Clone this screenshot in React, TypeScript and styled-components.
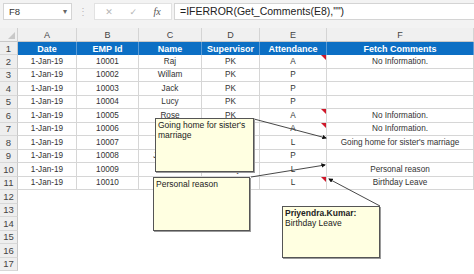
import styled, { createGlobalStyle } from "styled-components";

const GlobalStyle = createGlobalStyle`
    html, body {
        margin: 0;
        padding: 0;
        background: #ffffff;
    }
    body {
        font-family: "Liberation Sans", Arial, sans-serif;
    }
`;

type Row = {
    date: string;
    id: string;
    name: string;
    sup: string;
    att: string;
    comment: string;
    note?: "red" | "none";
};

const rows: Row[] = [
    { date: "1-Jan-19", id: "10001", name: "Raj", sup: "PK", att: "A", comment: "No Information.", note: "red" },
    { date: "1-Jan-19", id: "10002", name: "Willam", sup: "PK", att: "P", comment: "" },
    { date: "1-Jan-19", id: "10003", name: "Jack", sup: "PK", att: "P", comment: "" },
    { date: "1-Jan-19", id: "10004", name: "Lucy", sup: "PK", att: "P", comment: "" },
    { date: "1-Jan-19", id: "10005", name: "Rose", sup: "PK", att: "A", comment: "No Information.", note: "red" },
    { date: "1-Jan-19", id: "10006", name: "Mary", sup: "PK", att: "A", comment: "No Information.", note: "red" },
    { date: "1-Jan-19", id: "10007", name: "John", sup: "PK", att: "L", comment: "Going home for sister's marriage" },
    { date: "1-Jan-19", id: "10008", name: "Jonathan", sup: "Harry", att: "P", comment: "" },
    { date: "1-Jan-19", id: "10009", name: "Jacob", sup: "Harry", att: "L", comment: "Personal reason" },
    { date: "1-Jan-19", id: "10010", name: "Sam", sup: "Harry", att: "L", comment: "Birthday Leave", note: "red" },
];

const columns = ["A", "B", "C", "D", "E", "F"];
const headers = ["Date", "EMP Id", "Name", "Supervisor", "Attendance", "Fetch Comments"];
const emptyRows = [12, 13, 14, 15, 16, 17];

export default function App() {
    return (
        <Page>
            <GlobalStyle />
            <FormulaBar>
                <NameBox>
                    <span>F8</span>
                    <Caret>▾</Caret>
                </NameBox>
                <Grip>⋮</Grip>
                <FxButtons>
                    <FxGlyph>✕</FxGlyph>
                    <FxGlyph>✓</FxGlyph>
                    <FxLabel>fx</FxLabel>
                </FxButtons>
                <FormulaInput>=IFERROR(Get_Comments(E8),"")</FormulaInput>
            </FormulaBar>

            <Sheet>
                <Corner />
                {columns.map((c) => (
                    <ColHead key={c}>{c}</ColHead>
                ))}

                <RowHead>1</RowHead>
                {headers.map((h) => (
                    <HeadCell key={h}>{h}</HeadCell>
                ))}

                {rows.map((r, i) => (
                    <RowGroup key={r.id}>
                        <RowHead>{i + 2}</RowHead>
                        <Cell>{r.date}</Cell>
                        <Cell>{r.id}</Cell>
                        <Cell>{r.name}</Cell>
                        <Cell>{r.sup}</Cell>
                        <Cell $note={r.note === "red"}>{r.att}</Cell>
                        <Cell>{r.comment}</Cell>
                    </RowGroup>
                ))}

                {emptyRows.map((n) => (
                    <RowGroup key={n}>
                        <RowHead>{n}</RowHead>
                        <EmptyRow />
                    </RowGroup>
                ))}
            </Sheet>

            <CallOuts width="474" height="274" viewBox="0 0 474 274">
                <defs>
                    <marker id="tip" markerWidth="5" markerHeight="5" refX="4" refY="2.5" orient="auto">
                        <path d="M0,0 L5,2.5 L0,5 z" fill="#111" />
                    </marker>
                </defs>
                <line x1="254" y1="119" x2="326" y2="138" stroke="#333" strokeWidth="0.9" markerEnd="url(#tip)" />
                <line x1="251" y1="177" x2="325" y2="165" stroke="#333" strokeWidth="0.9" markerEnd="url(#tip)" />
                <line x1="380" y1="206" x2="329" y2="179" stroke="#333" strokeWidth="0.9" markerEnd="url(#tip)" />
            </CallOuts>

            <Note style={{ left: 155, top: 118, width: 99, height: 54 }}>
                Going home for sister's marriage
            </Note>
            <Note style={{ left: 153, top: 177, width: 97, height: 54 }}>
                Personal reason
            </Note>
            <Note style={{ left: 282, top: 206, width: 98, height: 52 }}>
                <Author>Priyendra.Kumar:</Author>
                Birthday Leave
            </Note>
        </Page>
    );
}

const Page = styled.div`
    position: relative;
    width: 474px;
    height: 274px;
    overflow: hidden;
    background: #ffffff;
`;

const FormulaBar = styled.div`
    display: flex;
    align-items: stretch;
    height: 19px;
    padding: 3px 0 0 3px;
    background: #f3f3f3;
    border-bottom: 6px solid #f3f3f3;
`;

const NameBox = styled.div`
    display: flex;
    align-items: center;
    justify-content: space-between;
    width: 69px;
    height: 17px;
    box-sizing: border-box;
    padding: 0 4px 0 5px;
    background: #ffffff;
    border: 1px solid #d4d4d4;
    font-size: 9.5px;
    color: #333;
`;

const Caret = styled.span`
    font-size: 8px;
    color: #666;
`;

const Grip = styled.div`
    width: 22px;
    text-align: center;
    font-size: 10px;
    line-height: 17px;
    color: #b8b8b8;
`;

const FxButtons = styled.div`
    display: flex;
    align-items: center;
    justify-content: space-around;
    width: 78px;
    height: 17px;
    padding: 0 2px;
    background: #ffffff;
    border: 1px solid #e2e2e2;
    box-sizing: border-box;
`;

const FxGlyph = styled.span`
    font-family: "DejaVu Sans", sans-serif;
    font-size: 9px;
    color: #b5b5b5;
`;

const FxLabel = styled.span`
    font-family: "Liberation Serif", serif;
    font-style: italic;
    font-size: 10px;
    color: #555;
`;

const FormulaInput = styled.div`
    flex: 1;
    height: 17px;
    margin-left: 2px;
    padding-left: 5px;
    background: #ffffff;
    border: 1px solid #d4d4d4;
    border-right: none;
    box-sizing: border-box;
    font-size: 10.5px;
    line-height: 15px;
    color: #222;
    white-space: nowrap;
`;

const Sheet = styled.div`
    display: grid;
    grid-template-columns: 18px 59px 62px 63px 58px 67px 147px;
    grid-template-rows: 14px 13px repeat(16, 13.5px);
`;

const RowGroup = styled.div`
    display: contents;
`;

const Corner = styled.div`
    position: relative;
    background: #f0f0f0;
    border-right: 1px solid #d0d0d0;
    border-bottom: 1px solid #c8c8c8;
    &::after {
        content: "";
        position: absolute;
        right: 2px;
        bottom: 2px;
        border-left: 7px solid transparent;
        border-bottom: 7px solid #c8c8c8;
    }
`;

const ColHead = styled.div`
    display: flex;
    align-items: center;
    justify-content: center;
    background: #f0f0f0;
    border-right: 1px solid #d4d4d4;
    border-bottom: 1px solid #c8c8c8;
    font-size: 9px;
    color: #444;
`;

const RowHead = styled.div`
    display: flex;
    align-items: center;
    justify-content: center;
    background: #eeeeee;
    border-right: 1px solid #c8c8c8;
    border-bottom: 1px solid #d8d8d8;
    font-size: 9.5px;
    color: #444;
`;

const HeadCell = styled.div`
    display: flex;
    align-items: center;
    justify-content: center;
    background: #0c6fc4;
    border-right: 1px solid #5b9bd5;
    color: #ffffff;
    font-weight: bold;
    font-size: 9px;
    white-space: nowrap;
`;

const Cell = styled.div<{ $note?: boolean }>`
    position: relative;
    display: flex;
    align-items: center;
    justify-content: center;
    border-right: 1px solid #d6d6d6;
    border-bottom: 1px solid #d6d6d6;
    font-size: 8.2px;
    color: #333;
    white-space: nowrap;
    overflow: hidden;
    &::after {
        content: "";
        display: ${(p) => (p.$note ? "block" : "none")};
        position: absolute;
        top: 0;
        right: 0;
        border-left: 5px solid transparent;
        border-top: 5px solid #d0182a;
    }
`;

const EmptyRow = styled.div`
    grid-column: span 6;
    background: #ffffff;
`;

const CallOuts = styled.svg`
    position: absolute;
    left: 0;
    top: 0;
    pointer-events: none;
`;

const Note = styled.div`
    position: absolute;
    box-sizing: border-box;
    padding: 1px 2px;
    background: #ffffe1;
    border: 1px solid #555;
    box-shadow: 1px 1px 0 #9a9a9a;
    font-size: 8.5px;
    line-height: 10px;
    color: #222;
`;

const Author = styled.div`
    font-weight: bold;
`;
